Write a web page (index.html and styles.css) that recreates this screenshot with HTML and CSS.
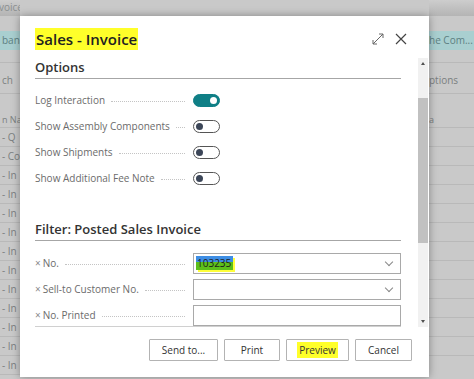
FILE: index.html
```html
<!DOCTYPE html>
<html lang="en">
<head>
    <meta charset="UTF-8">
    <title>Sales - Invoice</title>
    <link rel="stylesheet" href="styles.css">
</head>
<body>

<div class="backdrop">
    <div class="side side-left">
        <div class="topbar">voice</div>
        <div class="bg-row tile">ban</div>
        <div class="bg-row tall">ch</div>
        <div class="bg-row small">n Nar</div>
        <div class="bg-row">- Q</div>
        <div class="bg-row">- Co</div>
        <div class="bg-row">- In</div>
        <div class="bg-row">- In</div>
        <div class="bg-row">- In</div>
        <div class="bg-row">- In</div>
        <div class="bg-row">- In</div>
        <div class="bg-row">- In</div>
        <div class="bg-row">- In</div>
        <div class="bg-row">- In</div>
        <div class="bg-row">- In</div>
        <div class="bg-row">- In</div>
        <div class="bg-row">- In</div>
    </div>
    <div class="side side-right">
        <div class="topbar"></div>
        <div class="bg-row tile">he Com...</div>
        <div class="bg-row tall">ptions</div>
        <div class="bg-row small">a</div>
        <div class="bg-row"></div>
        <div class="bg-row"></div>
        <div class="bg-row"></div>
        <div class="bg-row"></div>
        <div class="bg-row"></div>
        <div class="bg-row"></div>
        <div class="bg-row"></div>
        <div class="bg-row"></div>
        <div class="bg-row"></div>
        <div class="bg-row"></div>
        <div class="bg-row"></div>
        <div class="bg-row"></div>
    </div>
</div>

<div class="dialog">
    <div class="dialog-head">
        <span class="title"><mark>Sales - Invoice</mark></span>
        <div class="head-icons">
            <svg width="12" height="12" viewBox="0 0 12 12" class="icon">
                <path d="M1 11 L11 1 M7 1 H11 V5 M1 7 V11 H5" fill="none" stroke="#666" stroke-width="1"/>
            </svg>
            <svg width="12" height="12" viewBox="0 0 12 12" class="icon">
                <path d="M1 1 L11 11 M11 1 L1 11" fill="none" stroke="#444" stroke-width="1.2"/>
            </svg>
        </div>
    </div>

    <div class="dialog-body">
        <div class="content">
            <h2 class="group">Options</h2>
            <div class="field">
                <span class="label">Log Interaction</span>
                <span class="toggle on"></span>
            </div>
            <div class="field">
                <span class="label">Show Assembly Components</span>
                <span class="toggle"></span>
            </div>
            <div class="field">
                <span class="label">Show Shipments</span>
                <span class="toggle"></span>
            </div>
            <div class="field">
                <span class="label">Show Additional Fee Note</span>
                <span class="toggle"></span>
            </div>

            <h2 class="group filter">Filter: Posted Sales Invoice</h2>
            <div class="field input-row">
                <span class="label"><span class="x">&times;</span> No.</span>
                <span class="box"><span class="sel">103235</span><span class="chev"></span></span>
            </div>
            <div class="field input-row">
                <span class="label"><span class="x">&times;</span> Sell-to Customer No.</span>
                <span class="box"><span class="chev"></span></span>
            </div>
            <div class="field input-row">
                <span class="label"><span class="x">&times;</span> No. Printed</span>
                <span class="box"></span>
            </div>
        </div>
        <div class="scrollbar">
            <span class="arrow up"></span>
            <span class="track-top"></span>
            <span class="thumb"></span>
            <span class="track-bottom"></span>
            <span class="arrow down"></span>
        </div>
    </div>

    <div class="dialog-foot">
        <button class="btn">Send to...</button>
        <button class="btn">Print</button>
        <button class="btn"><mark>Preview</mark></button>
        <button class="btn">Cancel</button>
    </div>
</div>

</body>
</html>
```

FILE: styles.css
```css
* {
    margin: 0;
    padding: 0;
    box-sizing: border-box;
    font-family: 'Open Sans', 'Noto Sans', sans-serif;
}
body {
    width: 474px;
    height: 379px;
    overflow: hidden;
    background: #c9c9c9;
    position: relative;
}
.backdrop {
    display: flex;
    justify-content: space-between;
    height: 379px;
}
.side {
    display: flex;
    flex-direction: column;
    overflow: hidden;
    white-space: nowrap;
    color: #6f7a7a;
    font-size: 10px;
}
.side-left {
    width: 20px;
}
.side-right {
    width: 45px;
}
.topbar {
    height: 16px;
    line-height: 14px;
    background: linear-gradient(#cdcdcd, #b4b4b4);
    color: #8a8f90;
    flex: none;
}
.side-left .topbar {
    margin-left: -1px;
}
.bg-row {
    height: 19px;
    line-height: 18px;
    border-bottom: 1px solid #b9b9b9;
    flex: none;
    padding-left: 2px;
    color: #7b7f80;
}
.bg-row.tile {
    margin-top: 15px;
    background: #a9cfd0;
    border-bottom: 0;
    color: #5d7f81;
}
.bg-row.tall {
    height: 32px;
    line-height: 30px;
    margin-top: 12px;
    border-top: 1px solid #b9b9b9;
    padding-top: 2px;
}
.bg-row.small {
    height: 34px;
    padding-top: 20px;
    line-height: 12px;
    font-size: 9px;
}
.side-right .bg-row {
    padding-left: 0;
}

/* dialog */
.dialog {
    position: absolute;
    left: 20px;
    top: 16px;
    width: 409px;
    height: 361px;
    background: #fff;
    box-shadow: 0 0 8px rgba(0, 0, 0, 0.35);
    display: flex;
    flex-direction: column;
}
.dialog-head {
    height: 42px;
    display: flex;
    align-items: center;
    justify-content: space-between;
    padding: 4px 22px 0 15px;
    flex: none;
}
.title {
    font-size: 15px;
    font-weight: 600;
    color: #212121;
}
.title mark {
    background: #ffff2a;
    padding: 1px 1px;
    color: #212121;
}
.head-icons {
    display: flex;
    gap: 11px;
}
.icon {
    display: block;
}
.dialog-body {
    flex: 1;
    display: flex;
    overflow: hidden;
}
.content {
    flex: 1;
    border-bottom: 1px solid #d0d0d0;
    margin: 0 17px 0 15px;
}
.group {
    font-size: 13px;
    font-weight: 600;
    color: #333;
    height: 21px;
    line-height: 18px;
    border-bottom: 1px solid #a6a6a6;
    margin-bottom: 8px;
}
.group.filter {
    margin-top: 29px;
    margin-bottom: 9px;
}
.field {
    display: flex;
    align-items: center;
    height: 26px;
}
.label {
    width: 158px;
    flex: none;
    display: flex;
    align-items: center;
    font-size: 10px;
    color: #6b6b6b;
    white-space: nowrap;
    padding-right: 8px;
}
.label::after {
    content: "";
    flex: 1;
    margin-left: 6px;
    margin-top: 2px;
    border-bottom: 1px dotted #c4c4c4;
}
.x {
    color: #8a8a8a;
    margin-right: 2px;
}
.toggle {
    width: 27px;
    height: 13px;
    border-radius: 7px;
    border: 1px solid #555;
    background: #fff;
    position: relative;
}
.toggle::after {
    content: "";
    position: absolute;
    left: 2px;
    top: 2px;
    width: 7px;
    height: 7px;
    border-radius: 50%;
    background: #3c4658;
}
.toggle.on {
    background: #0f7f86;
    border-color: #0f7f86;
}
.toggle.on::after {
    left: auto;
    right: 2px;
    background: #fff;
}
.input-row .box {
    flex: 1;
    height: 21px;
    border: 1px solid #a9a9a9;
    display: flex;
    align-items: center;
    padding: 0 8px 0 2px;
}
.sel {
    font-size: 10px;
    color: #1d1d1d;
    background: linear-gradient(#3e8ee4 0 45%, #5cbf1a 45% 100%);
    padding: 1px 2px 0 1px;
    line-height: 13px;
    box-shadow: 2px 2px 0 #ffff3a;
}
.chev {
    margin-left: auto;
    width: 6px;
    height: 6px;
    border-right: 1px solid #888;
    border-bottom: 1px solid #888;
    transform: rotate(45deg);
    margin-top: -3px;
}
.scrollbar {
    width: 10px;
    margin-right: 1px;
    display: flex;
    flex-direction: column;
    background: #f1f1f1;
    padding-bottom: 1px;
}
.arrow {
    height: 10px;
    flex: none;
    position: relative;
}
.arrow::after {
    content: "";
    position: absolute;
    left: 3px;
    border-left: 2px solid transparent;
    border-right: 2px solid transparent;
}
.arrow.up::after {
    top: 4px;
    border-bottom: 3px solid #505050;
}
.arrow.down::after {
    top: 4px;
    border-top: 3px solid #505050;
}
.track-top {
    height: 30px;
}
.thumb {
    height: 145px;
    background: #c1c1c1;
}
.track-bottom {
    flex: 1;
}
.dialog-foot {
    height: 50px;
    flex: none;
    display: flex;
    justify-content: flex-end;
    align-items: flex-start;
    gap: 6px;
    padding: 12px 17px 0 0;
}
.btn {
    height: 22px;
    border: 1px solid #b3b3b3;
    background: #fff;
    font-size: 10px;
    color: #333;
    padding: 0;
    white-space: nowrap;
    border-radius: 1px;
}
.btn:nth-child(1) { width: 69px; }
.btn:nth-child(2) { width: 56px; }
.btn:nth-child(3) { width: 63px; }
.btn:nth-child(4) { width: 57px; }
.btn mark {
    background: #ffff2a;
    color: #333;
    padding: 1px 2px;
}
```
